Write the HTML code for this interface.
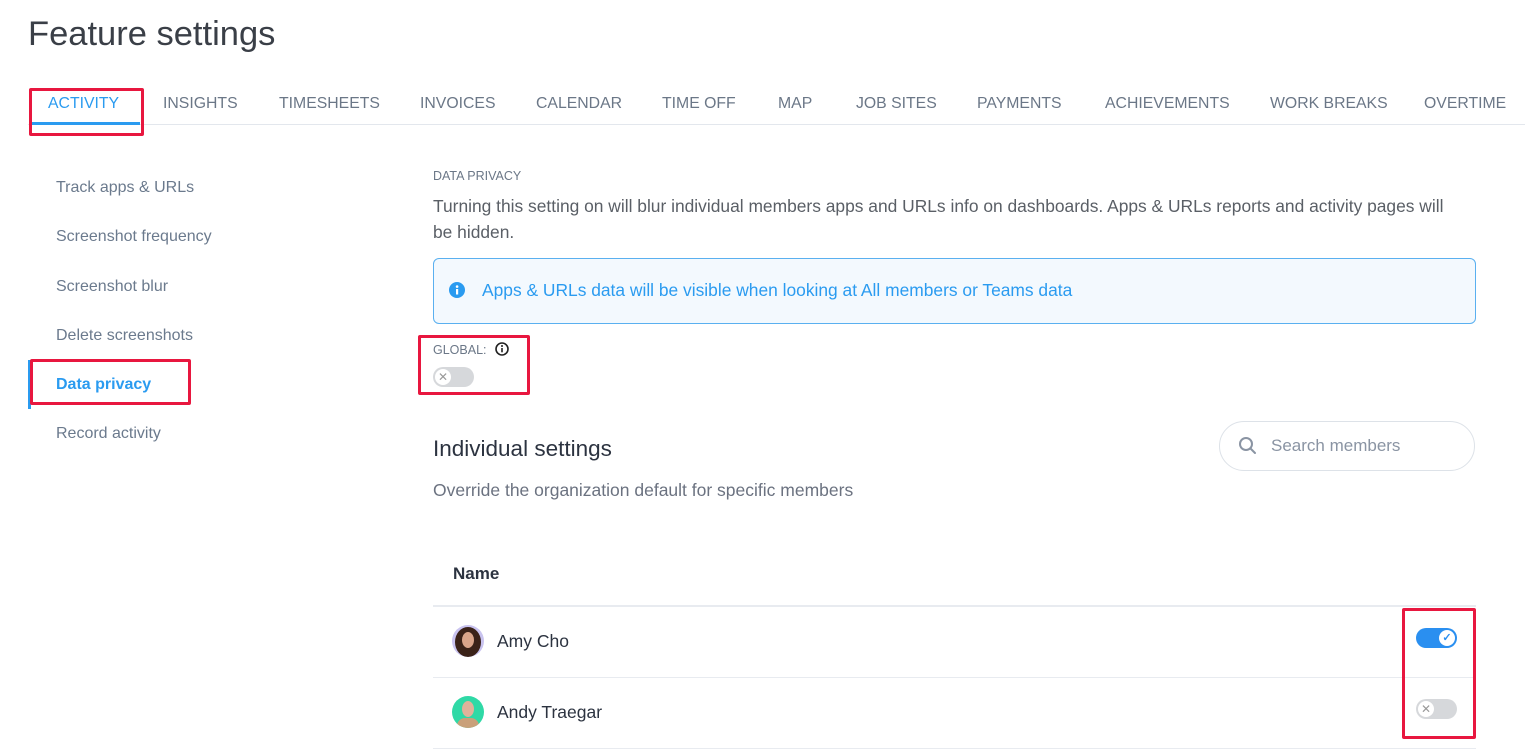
<!DOCTYPE html>
<html><head><meta charset="utf-8"><style>
*{margin:0;padding:0;box-sizing:border-box}
body{width:1536px;height:752px;overflow:hidden;background:#fff;font-family:"Liberation Sans",Arial,sans-serif;position:relative}
.a{position:absolute;white-space:nowrap}
.tab{position:absolute;top:95px;font-size:15.8px;color:#6b7787}
.nav{position:absolute;left:56px;font-size:16px;color:#6b7a8d}
.red{position:absolute;border:3px solid #e8173f;border-radius:2px}
.tg{position:absolute;width:41px;height:20px;border-radius:10px;background:#d6d8db}
.tg i{position:absolute;left:2px;top:2px;width:16px;height:16px;border-radius:50%;background:#fff;color:#999;font-style:normal;font-size:12px;line-height:16px;text-align:center}
.line{position:absolute;left:433px;width:1043px;height:2px;background:#e8ebf0}
</style></head><body>
<div class="a" style="left:28px;top:15px;font-size:34.5px;color:#3a3f47">Feature settings</div>

<div class="tab" style="left:48px;color:#2a9bf0">ACTIVITY</div>
<div class="tab" style="left:163px">INSIGHTS</div>
<div class="tab" style="left:279px">TIMESHEETS</div>
<div class="tab" style="left:420px">INVOICES</div>
<div class="tab" style="left:536px">CALENDAR</div>
<div class="tab" style="left:662px">TIME OFF</div>
<div class="tab" style="left:778px">MAP</div>
<div class="tab" style="left:856px">JOB SITES</div>
<div class="tab" style="left:977px">PAYMENTS</div>
<div class="tab" style="left:1105px">ACHIEVEMENTS</div>
<div class="tab" style="left:1270px">WORK BREAKS</div>
<div class="tab" style="left:1424px">OVERTIME</div>
<div class="a" style="left:28px;top:124px;width:1497px;height:1px;background:#e3e7ed"></div>
<div class="a" style="left:30px;top:122px;width:110px;height:3px;background:#2a9bf0"></div>
<div class="red" style="left:29px;top:88px;width:115px;height:48px"></div>

<div class="nav" style="top:179px">Track apps &amp; URLs</div>
<div class="nav" style="top:228px">Screenshot frequency</div>
<div class="nav" style="top:278px">Screenshot blur</div>
<div class="nav" style="top:327px">Delete screenshots</div>
<div class="nav" style="top:376px;color:#2a9bf0;font-weight:bold">Data privacy</div>
<div class="nav" style="top:425px">Record activity</div>
<div class="a" style="left:28px;top:360px;width:3px;height:49px;background:#2a9bf0"></div>
<div class="red" style="left:30px;top:359px;width:161px;height:46px"></div>

<div class="a" style="left:433px;top:169px;font-size:12.5px;color:#6b7787">DATA PRIVACY</div>
<div class="a" style="left:433px;top:193px;font-size:17.4px;color:#5a5f66;line-height:26px;white-space:normal;width:1031px">Turning this setting on will blur individual members apps and URLs info on dashboards. Apps &amp; URLs reports and activity pages will be hidden.</div>
<div class="a" style="left:433px;top:258px;width:1043px;height:66px;background:#f3f9fe;border:1px solid #5ab0f0;border-radius:6px"></div>
<svg class="a" style="left:449px;top:282px" width="16" height="16" viewBox="0 0 16 16"><circle cx="8" cy="8" r="8" fill="#2a9bf0"/><rect x="7" y="7" width="2.2" height="5.5" fill="#fff"/><circle cx="8.1" cy="4.6" r="1.3" fill="#fff"/></svg>
<div class="a" style="left:482px;top:280px;font-size:17.4px;color:#2a9bf0">Apps &amp; URLs data will be visible when looking at All members or Teams data</div>

<div class="a" style="left:433px;top:343px;font-size:12.5px;color:#6b7787">GLOBAL:</div>
<svg class="a" style="left:495px;top:342px" width="14" height="14" viewBox="0 0 14 14"><circle cx="7" cy="7" r="6" fill="none" stroke="#222" stroke-width="1.6"/><rect x="6.2" y="6" width="1.6" height="4.3" fill="#222"/><circle cx="7" cy="4" r="1" fill="#222"/></svg>
<div class="tg" style="left:433px;top:367px"><i>✕</i></div>
<div class="red" style="left:418px;top:335px;width:112px;height:60px"></div>

<div class="a" style="left:433px;top:436px;font-size:22.5px;color:#2c3340">Individual settings</div>
<div class="a" style="left:1219px;top:421px;width:256px;height:50px;border:1px solid #dde2e8;border-radius:25px"></div>
<svg class="a" style="left:1238px;top:436px" width="19" height="19" viewBox="0 0 19 19"><circle cx="8" cy="8" r="6" fill="none" stroke="#8a94a3" stroke-width="2"/><line x1="12.5" y1="12.5" x2="17" y2="17" stroke="#8a94a3" stroke-width="2" stroke-linecap="round"/></svg>
<div class="a" style="left:1271px;top:436px;font-size:17px;color:#8a94a3">Search members</div>
<div class="a" style="left:433px;top:480px;font-size:17.5px;color:#6b7280">Override the organization default for specific members</div>

<div class="a" style="left:453px;top:564px;font-size:17px;color:#2c3340;font-weight:bold">Name</div>
<div class="line" style="top:605px"></div>
<div class="line" style="top:677px;height:1px"></div>
<div class="line" style="top:748px;height:1px"></div>

<div class="a" style="left:452px;top:625px;width:32px;height:32px;border-radius:50%;background:#c9c3ef;overflow:hidden"><div style="position:absolute;left:3px;top:2px;width:26px;height:30px;border-radius:50%;background:#3a2218"></div><div style="position:absolute;left:10px;top:7px;width:12px;height:16px;border-radius:50%;background:#d9a58a"></div></div>
<div class="a" style="left:497px;top:631px;font-size:17.5px;color:#2c3340">Amy Cho</div>
<div class="a" style="left:452px;top:696px;width:32px;height:32px;border-radius:50%;background:#2fd9a6;overflow:hidden"><div style="position:absolute;left:10px;top:5px;width:12px;height:16px;border-radius:50%;background:#e0b29a"></div><div style="position:absolute;left:5px;top:22px;width:22px;height:12px;border-radius:8px 8px 0 0;background:#c9a07a"></div></div>
<div class="a" style="left:497px;top:702px;font-size:17.5px;color:#2c3340">Andy Traegar</div>

<div class="tg" style="left:1416px;top:628px;background:#2a8ff0"><i style="left:23px;color:#2a8ff0;font-size:11px;font-weight:bold">✓</i></div>
<div class="tg" style="left:1416px;top:699px"><i>✕</i></div>
<div class="red" style="left:1402px;top:608px;width:74px;height:131px"></div>
</body></html>
